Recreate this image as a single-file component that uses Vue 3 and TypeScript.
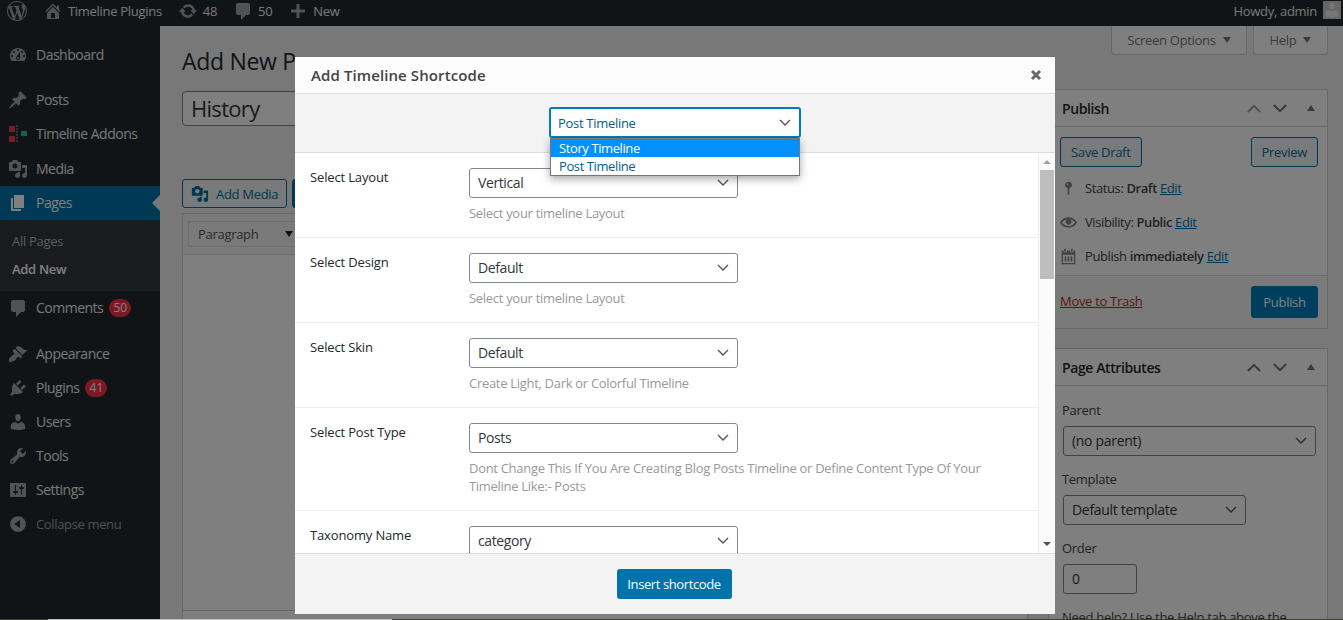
<template>
  <div class="screen">
    <header class="adminbar">
      <div class="bar-left">
        <svg class="bar-logo" viewBox="0 0 20 20"><path :d="icons.wp" /></svg>
        <span class="bar-item"><svg viewBox="0 0 20 20"><path :d="icons.home" /></svg>Timeline Plugins</span>
        <span class="bar-item"><svg viewBox="0 0 20 20"><path :d="icons.update" /></svg>48</span>
        <span class="bar-item"><svg viewBox="0 0 20 20"><path :d="icons.comment" /></svg>50</span>
        <span class="bar-item"><svg viewBox="0 0 20 20"><path :d="icons.plus" /></svg>New</span>
      </div>
      <div class="bar-right">
        <span>Howdy, admin</span>
        <span class="avatar"><svg viewBox="0 0 20 20"><path :d="icons.users" /></svg></span>
      </div>
    </header>

    <div class="layout">
      <nav class="sidebar">
        <template v-for="m in menu" :key="m.label">
          <div class="menu-item" :class="[m.cls, { active: m.active, dim: m.dim }]">
            <span class="menu-icon">
              <svg v-if="m.icon" viewBox="0 0 20 20"><path :d="icons[m.icon]" /></svg>
              <svg v-else viewBox="0 0 20 20" class="addons">
                <rect x="1" y="2" width="6" height="6" fill="#f0394e" />
                <rect x="1" y="12" width="6" height="6" fill="#f0394e" />
                <rect x="13" y="7" width="6" height="5" fill="#1fc4b4" />
                <path d="M9 1v18" stroke="#a0a5aa" stroke-dasharray="2 1" />
              </svg>
            </span>
            <span class="menu-label">{{ m.label }}</span>
            <span v-if="m.badge" class="badge">{{ m.badge }}</span>
          </div>
          <div v-if="m.active" class="submenu">
            <div>All Pages</div>
            <div class="current">Add New</div>
          </div>
        </template>
      </nav>

      <main class="content">
        <div class="screen-links">
          <span class="tab screen-opt">Screen Options <i class="caret"></i></span>
          <span class="tab help">Help <i class="caret"></i></span>
        </div>
        <h1>Add New Page</h1>
        <div class="columns">
          <div class="main-col">
            <div class="title-input">History</div>
            <div class="media-row">
              <span class="btn"><svg viewBox="0 0 20 20"><path :d="icons.media" /></svg>Add Media</span>
              <span class="btn solid">Add Form</span>
            </div>
            <div class="editor">
              <div class="toolbar">
                <span class="para">Paragraph <i class="caret"></i></span>
              </div>
              <div class="editor-area"></div>
              <div class="statusbar">
                <span>Word count: 0</span>
                <span class="saved">Draft saved at 10:38:19 am.</span>
              </div>
            </div>
          </div>

          <aside class="side-col">
            <section class="box">
              <div class="box-head">
                <h2>Publish</h2>
                <span class="box-tools">
                  <svg class="dimmed" viewBox="0 0 16 10"><path d="M1 9l7-7 7 7" /></svg>
                  <svg viewBox="0 0 16 10"><path d="M1 1l7 7 7-7" /></svg>
                  <i class="caret up"></i>
                </span>
              </div>
              <div class="pub-actions">
                <span class="btn small">Save Draft</span>
                <span class="btn small">Preview</span>
              </div>
              <div class="pub-row">
                <svg viewBox="0 0 20 20"><path :d="icons.status" /></svg>
                <span>Status: <b>Draft</b> <a>Edit</a></span>
              </div>
              <div class="pub-row">
                <svg viewBox="0 0 20 20"><path :d="icons.eye" /></svg>
                <span>Visibility: <b>Public</b> <a>Edit</a></span>
              </div>
              <div class="pub-row">
                <svg viewBox="0 0 20 20"><path :d="icons.calendar" fill-rule="evenodd" /></svg>
                <span>Publish <b>immediately</b> <a>Edit</a></span>
              </div>
              <div class="pub-foot">
                <a class="trash">Move to Trash</a>
                <span class="btn solid publish">Publish</span>
              </div>
            </section>

            <section class="box attrs">
              <div class="box-head">
                <h2>Page Attributes</h2>
                <span class="box-tools">
                  <svg viewBox="0 0 16 10"><path d="M1 9l7-7 7 7" /></svg>
                  <svg viewBox="0 0 16 10"><path d="M1 1l7 7 7-7" /></svg>
                  <i class="caret up"></i>
                </span>
              </div>
              <div class="attr-body">
                <div class="attr-label">Parent</div>
                <div class="fake-select full">(no parent)<svg class="chev" viewBox="0 0 12 8"><path d="M1 1l5 5 5-5" /></svg></div>
                <div class="attr-label">Template</div>
                <div class="fake-select tpl">Default template<svg class="chev" viewBox="0 0 12 8"><path d="M1 1l5 5 5-5" /></svg></div>
                <div class="attr-label">Order</div>
                <div class="fake-select order">0</div>
                <p class="need-help">Need help? Use the Help tab above the</p>
              </div>
            </section>
          </aside>
        </div>
      </main>
    </div>

    <div class="overlay"></div>
    <div class="footer-strip"><span></span></div>

    <div class="modal">
      <div class="modal-head">
        <span>Add Timeline Shortcode</span>
        <svg class="close" viewBox="0 0 12 12"><path d="M2 2l8 8M10 2l-8 8" /></svg>
      </div>
      <div class="modal-top">
        <div class="type-select">
          <div class="type-current">Post Timeline<svg class="chev" viewBox="0 0 12 8"><path d="M1 1l5 5 5-5" /></svg></div>
          <div class="type-menu">
            <div class="opt on">Story Timeline</div>
            <div class="opt">Post Timeline</div>
          </div>
        </div>
      </div>
      <div class="modal-mid">
        <div class="rows">
          <div v-for="r in rows" :key="r.label" class="row">
            <label>{{ r.label }}</label>
            <div class="field">
              <div class="fake-select modal-sel">{{ r.value }}<svg class="chev" viewBox="0 0 12 8"><path d="M1 1l5 5 5-5" /></svg></div>
              <p v-if="r.desc" class="desc">{{ r.desc }}</p>
            </div>
          </div>
        </div>
        <div class="scrollbar">
          <i class="sb-up"></i>
          <div class="sb-track"><div class="sb-thumb"></div></div>
          <i class="sb-down"></i>
        </div>
      </div>
      <div class="modal-foot">
        <span class="insert">Insert shortcode</span>
      </div>
    </div>
  </div>
</template>

<script setup lang="ts">
const icons: Record<string, string> = {
  wp: "M20 10c0-5.51-4.49-10-10-10C4.48 0 0 4.49 0 10c0 5.52 4.48 10 10 10 5.51 0 10-4.48 10-10zM7.78 15.37L4.37 6.22c.55-.02 1.17-.08 1.17-.08.5-.06.44-1.13-.06-1.11 0 0-1.45.11-2.37.11-.18 0-.37 0-.58-.01C4.12 2.69 6.87 1.11 10 1.11c2.33 0 4.45.87 6.05 2.34-.68-.11-1.65.39-1.65 1.58 0 .74.45 1.36.9 2.1.35.61.55 1.36.55 2.46 0 1.49-1.4 5-1.4 5l-3.03-8.37c.54-.02.82-.17.82-.17.5-.05.44-1.25-.06-1.22 0 0-1.44.12-2.38.12-.87 0-2.33-.12-2.33-.12-.5-.03-.56 1.2-.06 1.22l.92.08 1.26 3.41zM17.41 10c.24-.64.74-1.87.43-4.25.7 1.29 1.05 2.71 1.05 4.25 0 3.29-1.73 6.24-4.4 7.78.97-2.59 1.94-5.2 2.92-7.78zM6.1 18.09C3.12 16.65 1.11 13.53 1.11 10c0-1.3.23-2.48.72-3.59C3.25 10.3 4.67 14.2 6.1 18.09zm4.03-6.63l2.58 6.98c-.86.29-1.76.45-2.71.45-.79 0-1.57-.11-2.29-.33.81-2.38 1.62-4.74 2.42-7.1z",
  home: "M16 8.5l1.53 1.53-1.06 1.06L10 4.62l-6.47 6.47-1.06-1.06L10 2.5l4 4v-2h2v4zm-6-2.46l6 5.99V18H4v-5.97zM12 17v-5H8v5h4z",
  update: "M10.2 3.28c3.53 0 6.43 2.61 6.92 6h2.08l-3.5 4-3.5-4h2.32c-.45-1.97-2.21-3.45-4.32-3.45-1.45 0-2.73.71-3.54 1.78L4.95 5.66C6.23 4.2 8.11 3.28 10.2 3.28zm-.4 13.44c-3.52 0-6.43-2.61-6.92-6H.8l3.5-4c1.17 1.33 2.33 2.67 3.5 4H5.48c.45 1.97 2.21 3.45 4.32 3.45 1.45 0 2.73-.71 3.54-1.78l1.71 1.95c-1.28 1.46-3.15 2.38-5.25 2.38z",
  comment: "M5 2h10c1.1 0 2 .9 2 2v8c0 1.1-.9 2-2 2h-2l-5 5v-5H5c-1.1 0-2-.9-2-2V4c0-1.1.9-2 2-2z",
  plus: "M17 8.5v3h-5.5V17h-3v-5.5H3v-3h5.5V3h3v5.5H17z",
  dashboard: "M3.76 16h12.48c1.1-1.37 1.76-3.11 1.76-5 0-4.42-3.58-8-8-8s-8 3.58-8 8c0 1.89.66 3.63 1.76 5zM10 4c.55 0 1 .45 1 1s-.45 1-1 1-1-.45-1-1 .45-1 1-1zM6 6c.55 0 1 .45 1 1s-.45 1-1 1-1-.45-1-1 .45-1 1-1zm8 0c.55 0 1 .45 1 1s-.45 1-1 1-1-.45-1-1 .45-1 1-1zm-5.37 5.55L12 7v6c0 1.1-.9 2-2 2s-2-.9-2-2c0-.57.24-1.08.63-1.45zM4 10c.55 0 1 .45 1 1s-.45 1-1 1-1-.45-1-1 .45-1 1-1zm12 0c.55 0 1 .45 1 1s-.45 1-1 1-1-.45-1-1 .45-1 1-1zm-5 3c0-.55-.45-1-1-1s-1 .45-1 1 .45 1 1 1 1-.45 1-1z",
  post: "M10.44 3.02l1.82-1.82 6.36 6.35-1.83 1.82c-1.05-.68-2.48-.57-3.41.36l-.75.75c-.92.93-1.04 2.35-.35 3.41l-1.83 1.82-2.41-2.41-2.8 2.79c-.42.42-3.38 2.71-3.8 2.29s1.86-3.39 2.28-3.81l2.79-2.79L4.1 9.36l1.83-1.82c1.05.69 2.48.57 3.4-.36l.75-.75c.93-.92 1.05-2.35.36-3.41z",
  media: "M13 11V4c0-.55-.45-1-1-1h-1.67L9 1H5L3.67 3H2c-.55 0-1 .45-1 1v7c0 .55.45 1 1 1h10c.55 0 1-.45 1-1zM7 4.5c1.38 0 2.5 1.12 2.5 2.5S8.38 9.5 7 9.5 4.5 8.38 4.5 7 5.62 4.5 7 4.5zM14 6h5v10.5c0 1.38-1.12 2.5-2.5 2.5S14 17.88 14 16.5s1.12-2.5 2.5-2.5c.17 0 .34.02.5.05V9h-3V6zm-4 8.05V13h2v3.5c0 1.38-1.12 2.5-2.5 2.5S7 17.88 7 16.5 8.12 14 9.5 14c.17 0 .34.02.5.05z",
  pages: "M6 15V2h10v13H6zm-1 1h8v2H3V5h2v11z",
  appearance: "M14.48 11.06L7.41 3.99l1.5-1.5c.5-.56 2.3-.47 3.51.32 1.21.8 1.43 1.28 2.91 2.1 1.18.64 2.45 1.26 4.45.85zm-.71.71L6.7 4.7 4.93 6.47c-.39.39-.39 1.02 0 1.41l1.06 1.06c.39.39.39 1.03 0 1.42-.6.6-1.43 1.11-2.21 1.69-.35.26-.7.53-1.01.84C1.43 13.23.78 15.27 1 17.4c.21.2.45.45.66.46 2.12.22 4.17-.42 5.5-1.75.29-.29.55-.63.81-.97.6-.78 1.14-1.61 1.76-2.22.39-.39 1.02-.39 1.41 0l1.06 1.06c.39.39 1.03.39 1.42 0z",
  plugins: "M13.11 4.36L9.87 7.6 8 5.73l3.24-3.24c.35-.34 1.05-.2 1.56.32.52.51.66 1.21.31 1.55zm-8 1.77l.91-1.12 9.01 9.01-1.19.84c-.71.71-2.63 1.16-3.82 1.16H6.14L4.9 17.26c-.59.59-1.54.59-2.12 0-.59-.58-.59-1.53 0-2.12l1.24-1.24v-3.88c0-1.13.4-3.19 1.09-3.89zm7.26 3.97l3.24-3.24c.34-.35 1.04-.21 1.55.31.52.51.66 1.21.31 1.55l-3.24 3.25z",
  users: "M10 9.25c-2.27 0-2.73-3.44-2.73-3.44C7 4.02 7.82 2 9.97 2c2.16 0 2.98 2.02 2.71 3.81 0 0-.41 3.44-2.68 3.44zm0 2.57L12.72 10c2.39 0 4.52 2.33 4.52 4.53v2.49s-3.65 1.13-7.24 1.13c-3.65 0-7.24-1.13-7.24-1.13v-2.49c0-2.25 1.94-4.48 4.47-4.48z",
  tools: "M16.68 9.77c-1.34 1.34-3.3 1.67-4.95.99l-5.41 6.52c-.99.99-2.59.99-3.58 0s-.99-2.59 0-3.57l6.52-5.42c-.68-1.65-.35-3.61.99-4.95 1.28-1.28 3.12-1.62 4.72-1.06l-2.89 2.89 2.82 2.82 2.86-2.87c.53 1.58.18 3.39-1.08 4.67zM3.81 16.21c.4.39 1.04.39 1.43 0 .4-.4.4-1.04 0-1.43-.39-.4-1.03-.4-1.43 0-.39.39-.39 1.03 0 1.43z",
  settings: "M18 16V4c0-.55-.45-1-1-1H3c-.55 0-1 .45-1 1v12c0 .55.45 1 1 1h14c.55 0 1-.45 1-1zM8 11h1c.55 0 1 .45 1 1s-.45 1-1 1H8v1.5c0 .28-.22.5-.5.5s-.5-.22-.5-.5V13H6c-.55 0-1-.45-1-1s.45-1 1-1h1V5.5c0-.28.22-.5.5-.5s.5.22.5.5V11zm5-2h-1c-.55 0-1-.45-1-1s.45-1 1-1h1V5.5c0-.28.22-.5.5-.5s.5.22.5.5V7h1c.55 0 1 .45 1 1s-.45 1-1 1h-1v5.5c0 .28-.22.5-.5.5s-.5-.22-.5-.5V9z",
  collapse: "M10 2.16c4.33 0 7.84 3.51 7.84 7.84s-3.51 7.84-7.84 7.84S2.16 14.33 2.16 10 5.71 2.16 10 2.16zm2 11.72V6.12L6.18 9.97z",
  status: "M14 6c0 1.86-1.28 3.41-3 3.86V16c0 1-2 2-2 2V9.86c-1.72-.45-3-2-3-3.86 0-2.21 1.79-4 4-4s4 1.79 4 4zM8 5c0 .55.45 1 1 1s1-.45 1-1-.45-1-1-1-1 .45-1 1z",
  eye: "M19.7 9.4C17.7 6 14.1 3.9 10 3.9S2.3 6 .3 9.4L0 10l.3.6c2 3.4 5.7 5.5 9.7 5.5s7.7-2.1 9.7-5.5l.3-.6-.3-.6zM10 14.1c-3.1 0-6-1.6-7.7-4.1C3.6 8 5.7 6.6 8 6.1c-.9.6-1.5 1.7-1.5 2.9 0 1.9 1.6 3.5 3.5 3.5s3.5-1.6 3.5-3.5c0-1.2-.6-2.3-1.5-2.9 2.3.5 4.4 1.9 5.7 3.9-1.7 2.5-4.6 4.1-7.7 4.1z",
  calendar: "M5 1h2v3H5zM13 1h2v3h-2zM2 3h2v2h4V3h4v2h4V3h2v16H2zM3.5 8v9.5h13V8zM5.5 10h2v6h-2zM9 10h2v6H9zM12.5 10h2v6h-2z",
};

interface MenuEntry {
  label: string;
  icon?: string;
  active?: boolean;
  dim?: boolean;
  cls?: string;
  badge?: string;
}

const menu: MenuEntry[] = [
  { label: "Dashboard", icon: "dashboard" },
  { label: "Posts", icon: "post", cls: "gap" },
  { label: "Timeline Addons" },
  { label: "Media", icon: "media", cls: "nudge" },
  { label: "Pages", icon: "pages", active: true },
  { label: "Comments", icon: "comment", badge: "50" },
  { label: "Appearance", icon: "appearance", cls: "gap wide" },
  { label: "Plugins", icon: "plugins", badge: "41" },
  { label: "Users", icon: "users" },
  { label: "Tools", icon: "tools" },
  { label: "Settings", icon: "settings" },
  { label: "Collapse menu", icon: "collapse", dim: true },
];

const rows = [
  { label: "Select Layout", value: "Vertical", desc: "Select your timeline Layout" },
  { label: "Select Design", value: "Default", desc: "Select your timeline Layout" },
  { label: "Select Skin", value: "Default", desc: "Create Light, Dark or Colorful Timeline" },
  {
    label: "Select Post Type",
    value: "Posts",
    desc: "Dont Change This If You Are Creating Blog Posts Timeline or Define Content Type Of Your Timeline Like:- Posts",
  },
  { label: "Taxonomy Name", value: "category", desc: "" },
];
</script>

<style scoped>
.screen {
  position: relative;
  display: flex;
  flex-direction: column;
  height: 620px;
  overflow: hidden;
  background: #f1f1f1;
  font-family: "Open Sans", "Noto Sans", sans-serif;
  font-size: 13px;
  letter-spacing: -0.3px;
  color: #444;
}
.adminbar {
  display: flex;
  justify-content: space-between;
  height: 26px;
  flex: none;
  background: #23282d;
  color: #eee;
  line-height: 22px;
}
.adminbar svg { fill: #a0a5aa; }
.bar-left { display: flex; align-items: flex-start; padding-left: 7px; }
.bar-logo { width: 20px; height: 20px; margin: 1px 16px 0 0; }
.bar-item { display: flex; align-items: center; margin-right: 16px; height: 22px; }
.bar-item svg { width: 20px; height: 20px; margin-right: 5px; }
.bar-right { display: flex; padding-right: 2px; }
.avatar {
  width: 18px;
  height: 18px;
  margin: 1px 0 0 6px;
  background: #ccc;
  display: flex;
}
.avatar svg { fill: #eee; width: 18px; height: 18px; }

.layout { display: flex; flex: 1; min-height: 0; }
.sidebar {
  width: 160px;
  flex: none;
  background: #23282d;
  padding-top: 12px;
  color: #eee;
  font-size: 14px;
  letter-spacing: -0.5px;
}
.menu-item {
  position: relative;
  display: flex;
  align-items: center;
  height: 34px;
}
.menu-item.gap { margin-top: 11px; }
.menu-item.wide { margin-top: 12px; }
.menu-item.nudge { margin-top: 1px; }
.menu-label { padding-bottom: 2px; }
.menu-icon { width: 36px; display: flex; padding-left: 8px; box-sizing: border-box; }
.menu-icon svg { width: 20px; height: 20px; fill: #a0a5aa; }
.menu-item.active { background: #0073aa; color: #fff; }
.menu-item.active svg { fill: #fff; }
.menu-item.active::after {
  content: "";
  position: absolute;
  right: 0;
  top: 9px;
  border: 8px solid transparent;
  border-right-color: #f1f1f1;
  border-left-width: 0;
}
.menu-item.dim { color: #9ba0a5; font-size: 13px; letter-spacing: -0.35px; }
.menu-item.dim .menu-label { padding-bottom: 0; }
.badge {
  margin-left: 6px;
  min-width: 14px;
  height: 18px;
  line-height: 18px;
  padding: 0 4px;
  border-radius: 9px;
  background: #fa3348;
  color: #fff;
  font-size: 12px;
  letter-spacing: 0;
  text-align: center;
}
.submenu {
  background: #32373c;
  height: 71px;
  padding: 7px 12px 0;
  box-sizing: border-box;
  color: #b4b9be;
  font-size: 13px;
  letter-spacing: -0.3px;
}
.submenu div { height: 28px; line-height: 28px; }
.submenu .current { color: #fff; font-weight: 600; letter-spacing: -0.3px; }

.content { flex: 1; min-width: 0; padding: 0 15px 0 22px; }
.screen-links { display: flex; justify-content: flex-end; gap: 6px; height: 29px; }
.tab {
  display: flex;
  align-items: center;
  justify-content: center;
  gap: 7px;
  box-sizing: border-box;
  height: 29px;
  background: #fff;
  border: 1px solid #ccd0d4;
  border-top: 0;
  border-radius: 0 0 4px 4px;
  color: #72777c;
}
.screen-opt { width: 136px; }
.help { width: 75px; }
.caret {
  display: inline-block;
  border: 4px solid transparent;
  border-top: 6px solid currentColor;
  border-bottom: 0;
}
.caret.up { border-top: 0; border-bottom: 6px solid #72777c; }
h1 {
  margin: -8px 0 0;
  height: 42px;
  font-size: 23px;
  font-weight: 400;
  line-height: 28px;
  color: #23282d;
}
.columns {
  display: grid;
  grid-template-columns: 1fr 280px;
  column-gap: 20px;
}
.main-col { padding-top: 2px; }
.title-input {
  height: 35px;
  box-sizing: border-box;
  border: 1px solid #7e8993;
  border-radius: 4px;
  background: #fff;
  padding-left: 8px;
  font-size: 22px;
  letter-spacing: -0.7px;
  line-height: 33px;
  color: #32373c;
}
.media-row { display: flex; gap: 5px; margin-top: 53px; }
.btn {
  display: inline-flex;
  align-items: center;
  justify-content: center;
  box-sizing: border-box;
  height: 29px;
  padding: 0 8px;
  border: 1px solid #0071a1;
  border-radius: 3px;
  background: #f3f5f6;
  color: #0071a1;
}
.btn svg { width: 18px; height: 18px; fill: #0071a1; margin-right: 7px; }
.btn.solid { background: #0073aa; color: #fff; }
.editor {
  margin-top: 5px;
  border: 1px solid #ccd0d4;
  background: #fff;
  height: 420px;
  box-sizing: border-box;
  display: flex;
  flex-direction: column;
  overflow: hidden;
}
.toolbar {
  height: 41px;
  flex: none;
  box-sizing: border-box;
  padding: 7px 5px;
  background: #f5f5f5;
  border-bottom: 1px solid #ddd;
}
.para {
  display: flex;
  align-items: center;
  justify-content: space-between;
  box-sizing: border-box;
  width: 110px;
  height: 26px;
  padding: 0 4px 0 9px;
  border: 1px solid #ddd;
  color: #555;
}
.para .caret { color: #222; }
.editor-area { height: 355px; flex: none; }
.statusbar {
  display: flex;
  justify-content: space-between;
  padding: 6px 32px 0 10px;
  flex: none;
  border-top: 1px solid #ccc;
  color: #32373c;
  font-size: 12px;
  background: #fff;
}
.box {
  background: #fff;
  border: 1px solid #ccd0d4;
  box-sizing: border-box;
}
.box-head {
  display: flex;
  align-items: center;
  justify-content: space-between;
  height: 37px;
  box-sizing: border-box;
  padding: 0 12px 0 13px;
  border-bottom: 1px solid #ccd0d4;
}
.box-head h2 {
  margin: 0;
  font-size: 14px;
  font-weight: 600;
  letter-spacing: -0.4px;
  color: #23282d;
}
.box-tools { display: flex; align-items: center; gap: 12px; }
.box-tools svg {
  width: 14px;
  height: 9px;
  fill: none;
  stroke: #72777c;
  stroke-width: 2.4;
}
.box-tools svg.dimmed { stroke: #a0a5aa; }
.box-tools .caret { margin-left: 8px; }
.pub-actions {
  display: flex;
  justify-content: space-between;
  padding: 10px 9px 0 11px;
}
.btn.small { height: 30px; padding: 0 10px; }
.pub-row {
  display: flex;
  align-items: center;
  height: 34px;
  padding-left: 11px;
  color: #444;
  letter-spacing: -0.4px;
}
.pub-actions + .pub-row { margin-top: 4px; }
.pub-row svg { width: 17px; height: 17px; fill: #82878c; margin-right: 8px; flex: none; }
.pub-row b { font-weight: 600; }
a { color: #0073aa; text-decoration: underline; }
.pub-foot {
  display: flex;
  align-items: center;
  justify-content: space-between;
  height: 52px;
  margin-top: 2px;
  padding: 0 9px 0 11px;
  border-top: 1px solid #ddd;
  background: #f5f5f5;
}
a.trash { color: #b32d2e; margin-top: -2px; }
.btn.publish { height: 32px; width: 67px; padding: 0; background: #007cba; border-color: #007cba; }
.attrs { margin-top: 19px; }
.attr-body { padding: 16px 11px 0 14px; }
.attr-label { font-weight: 500; height: 17px; line-height: 17px; margin: 0 0 7px -1px; color: #444; }
.fake-select {
  position: relative;
  display: flex;
  align-items: center;
  box-sizing: border-box;
  height: 30px;
  padding: 0 0 1px 8px;
  border: 1px solid #7e8993;
  border-radius: 3px;
  background: #fff;
  color: #32373c;
  font-size: 14px;
}
.fake-select + .attr-label { margin-top: 15px; }
.fake-select.full { width: 253px; }
.fake-select.tpl { width: 183px; }
.fake-select.order { width: 74px; }
.need-help { margin: 14px 0 0 -1px; white-space: nowrap; color: #444; }
.chev {
  position: absolute;
  right: 8px;
  top: 50%;
  width: 12px;
  height: 8px;
  margin-top: -4px;
  fill: none;
  stroke: #555;
  stroke-width: 1.4;
}
.footer-strip {
  position: absolute;
  left: 0;
  right: 0;
  bottom: 0;
  height: 1px;
  background: #3d4030;
}
.footer-strip span {
  display: block;
  width: 344px;
  height: 1px;
  margin-left: 48px;
  background: #c4c4c4;
}

.overlay { position: absolute; inset: 0; background: rgba(0, 0, 0, 0.5); }

.modal {
  position: absolute;
  left: 295px;
  top: 57px;
  width: 760px;
  height: 557px;
  display: flex;
  flex-direction: column;
  background: #fff;
}
.modal-head {
  display: flex;
  align-items: center;
  justify-content: space-between;
  flex: none;
  height: 37px;
  box-sizing: border-box;
  padding: 0 13px 0 16px;
  background: #fcfcfc;
  border-bottom: 1px solid #ddd;
  font-size: 15px;
  font-weight: 600;
  letter-spacing: 0.1px;
  color: #444;
}
.close { width: 12px; height: 12px; fill: none; stroke: #666; stroke-width: 3; }
.modal-top {
  display: flex;
  justify-content: center;
  flex: none;
  height: 59px;
  box-sizing: border-box;
  padding-top: 13px;
  background: #f3f3f3;
  border-bottom: 1px solid #ddd;
}
.type-select { position: relative; width: 252px; }
.type-current {
  position: relative;
  display: flex;
  align-items: center;
  height: 31px;
  box-sizing: border-box;
  padding-left: 7px;
  border: 2px solid #007cba;
  border-radius: 3px;
  background: #fff;
  color: #016087;
}
.type-menu {
  position: absolute;
  left: 1px;
  right: 1px;
  top: 31px;
  z-index: 2;
  border: 1px solid #767676;
  background: #fff;
  box-shadow: 0 3px 8px rgba(0, 0, 0, 0.35);
  letter-spacing: -0.4px;
}
.opt { height: 18px; line-height: 18px; padding-left: 8px; color: #016087; }
.opt.on { background: #0090ff; color: #fff; }
.modal-mid { flex: 1; min-height: 0; display: flex; overflow: hidden; }
.rows { flex: 1; min-width: 0; }
.row {
  display: flex;
  padding: 15px 0 15px 15px;
  border-bottom: 1px solid #eee;
}
.row label {
  width: 159px;
  flex: none;
  line-height: 18px;
  font-weight: 500;
  letter-spacing: -0.15px;
  color: #23282d;
}
.field { flex: 1; padding-right: 40px; }
.modal-sel { width: 269px; letter-spacing: -0.4px; }
.desc {
  margin: 6px 0 0;
  line-height: 18px;
  color: #999;
}
.scrollbar {
  width: 17px;
  flex: none;
  display: flex;
  flex-direction: column;
  align-items: center;
  background: #fbfbfb;
  border-left: 1px solid #f0f0f0;
  box-sizing: border-box;
}
.sb-up, .sb-down { border: 4px solid transparent; flex: none; }
.sb-up { border-bottom: 4px solid #a3a3a3; border-top: 0; margin-top: 7px; }
.sb-down { border-top: 4px solid #505050; border-bottom: 0; margin-bottom: 7px; }
.sb-track { flex: 1; width: 100%; padding: 6px 1px 0 1px; box-sizing: border-box; }
.sb-thumb { height: 109px; background: #bdbdbd; }
.modal-foot {
  display: flex;
  justify-content: center;
  align-items: flex-start;
  flex: none;
  height: 61px;
  box-sizing: border-box;
  padding: 15px 2px 0 0;
  background: #f3f3f3;
  border-top: 1px solid #ddd;
}
.insert {
  display: flex;
  align-items: center;
  justify-content: center;
  width: 115px;
  height: 30px;
  border-radius: 3px;
  background: #0073aa;
  color: #fff;
  letter-spacing: -0.4px;
}
</style>
